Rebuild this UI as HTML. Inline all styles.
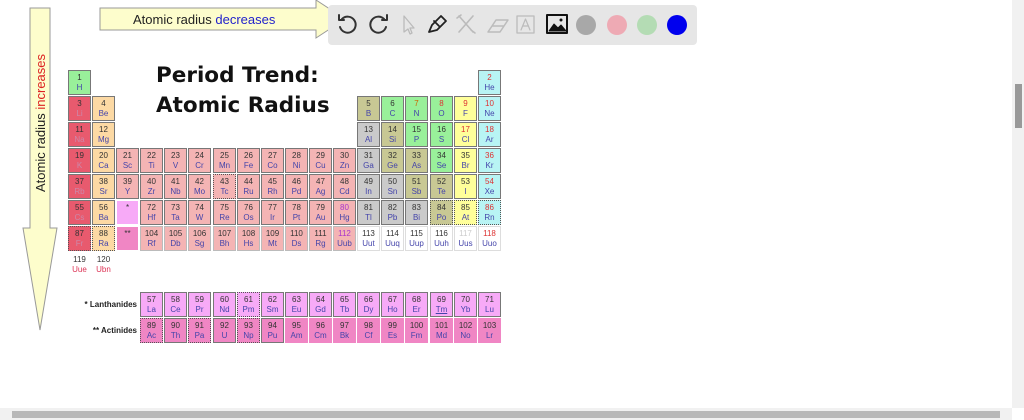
<!DOCTYPE html>
<html><head><style>
body{margin:0;width:1024px;height:420px;background:#fff;position:relative;overflow:hidden;font-family:"Liberation Sans",Arial,sans-serif}
.c{position:absolute;width:21px;height:23px;border:1px solid #777;text-align:center;font-size:8px;line-height:10px;box-sizing:content-box}
.c b{display:block;font-weight:normal;color:#333;margin-top:2px}
.c i{display:block;font-style:normal;color:#44a}
.d{border-style:dotted;border-color:#555}
.A{background:#e85a6e}.A i{color:#c8a}
.E{background:#fcd9a4}
.T{background:#f4b4b4}
.N{background:#99f09a}
.G{background:#b8f4f4}
.M{background:#c8c894}
.P{background:#cacaca}
.H{background:#ffff9a}
.W{background:#fff;border-color:#ddd}
.L{background:#f7aaf7}
.C{background:#f086c4}
.r b{color:#d33}
.lab{position:absolute;font-size:8px;font-weight:bold;color:#222;text-align:right;width:80px}
.tb{position:absolute;left:328px;top:5px;width:369px;height:40px;background:#e6e6e6;border-radius:4px}
</style></head><body>
<svg style="position:absolute;left:0;top:0" width="360" height="340">
<polygon points="30,8 50,8 50,228 57,228 40,330 23,228 30,228" fill="#fdfdcc" stroke="#999" stroke-width="1"/>
<polygon points="100,8 316,8 316,0 345,19 316,38 316,30 100,30" fill="#fdfdcc" stroke="#999" stroke-width="1"/>
<text transform="translate(45,192) rotate(-90)" font-family="Liberation Sans" font-size="13" fill="#222">Atomic radius <tspan fill="#d22">increases</tspan></text>
<text x="133" y="24" font-family="Liberation Sans" font-size="13" fill="#222">Atomic radius <tspan fill="#22c">decreases</tspan></text>
</svg>
<div class="tb">
<svg width="369" height="40" style="position:absolute;left:0;top:0" fill="none" stroke-width="2" stroke-linecap="round" stroke-linejoin="round">
<path d="M14 14a8 8 0 1 1 -2 8" stroke="#333"/><path d="M11 10v5h5" stroke="#333"/>
<path d="M56 14a8 8 0 1 0 2 8" stroke="#333"/><path d="M59 10v5h-5" stroke="#333"/>
<path d="M76 11l10 12-4 0 2 5-2 1-2-5-4 3z" stroke="#bbb" stroke-width="1.3"/>
<path d="M101 27l3-7 9-9 5 5-9 9z M106 16l5 5" stroke="#222" stroke-width="1.8"/>
<path d="M131 11l14 16M145 11l-14 16M129 13l4-3M143 25l4 3" stroke="#bbb" stroke-width="1.6"/>
<path d="M160 27l8-12h12l-8 12zM164 21h12" stroke="#bbb" stroke-width="1.5"/>
<rect x="189" y="11" width="17" height="17" stroke="#bbb" stroke-width="1.3"/><path d="M193 25l4.5-11 4.5 11M195 21h5" stroke="#bbb" stroke-width="1.2"/>
<rect x="219" y="10" width="20" height="18" stroke="#111" stroke-width="2"/><path d="M221 26l5-7 4 4 3-3 5 6z" fill="#111" stroke="#111" stroke-width="1"/><circle cx="233" cy="15" r="1.5" fill="#111" stroke="none"/>
<circle cx="258" cy="20" r="10" fill="#a8a8a8" stroke="none"/>
<circle cx="289" cy="20" r="10" fill="#eeaab4" stroke="none"/>
<circle cx="319" cy="20" r="10" fill="#b4dcb4" stroke="none"/>
<circle cx="349" cy="20" r="10" fill="#0000ee" stroke="none"/>
</svg></div>
<div style="position:absolute;left:156px;top:61px;font-family:'DejaVu Sans',sans-serif;font-weight:bold;font-size:21.5px;line-height:30px;color:#111">Period Trend:<br>Atomic Radius</div>

<div class="c N" style="left:68px;top:70px"><b>1</b><i>H</i></div>
<div class="c G r" style="left:478px;top:70px"><b>2</b><i>He</i></div>

<div class="c A" style="left:68px;top:96px"><b>3</b><i>Li</i></div>
<div class="c E" style="left:92px;top:96px"><b>4</b><i>Be</i></div>
<div class="c M" style="left:357px;top:96px"><b>5</b><i>B</i></div>
<div class="c N" style="left:381px;top:96px"><b>6</b><i>C</i></div>
<div class="c N" style="left:405px;top:96px"><b style="color:#c60">7</b><i>N</i></div>
<div class="c N r" style="left:430px;top:96px"><b>8</b><i>O</i></div>
<div class="c H r" style="left:454px;top:96px"><b>9</b><i>F</i></div>
<div class="c G r" style="left:478px;top:96px"><b>10</b><i>Ne</i></div>

<div class="c A" style="left:68px;top:122px"><b>11</b><i>Na</i></div>
<div class="c E" style="left:92px;top:122px"><b>12</b><i>Mg</i></div>
<div class="c P" style="left:357px;top:122px"><b>13</b><i>Al</i></div>
<div class="c M" style="left:381px;top:122px"><b>14</b><i>Si</i></div>
<div class="c N" style="left:405px;top:122px"><b>15</b><i>P</i></div>
<div class="c N" style="left:430px;top:122px"><b>16</b><i>S</i></div>
<div class="c H r" style="left:454px;top:122px"><b>17</b><i>Cl</i></div>
<div class="c G r" style="left:478px;top:122px"><b>18</b><i>Ar</i></div>

<div class="c A" style="left:68px;top:148px"><b>19</b><i>K</i></div>
<div class="c E" style="left:92px;top:148px"><b>20</b><i>Ca</i></div>
<div class="c T" style="left:116px;top:148px"><b>21</b><i>Sc</i></div>
<div class="c T" style="left:140px;top:148px"><b>22</b><i>Ti</i></div>
<div class="c T" style="left:164px;top:148px"><b>23</b><i>V</i></div>
<div class="c T" style="left:188px;top:148px"><b>24</b><i>Cr</i></div>
<div class="c T" style="left:213px;top:148px"><b>25</b><i>Mn</i></div>
<div class="c T" style="left:237px;top:148px"><b>26</b><i>Fe</i></div>
<div class="c T" style="left:261px;top:148px"><b>27</b><i>Co</i></div>
<div class="c T" style="left:285px;top:148px"><b>28</b><i>Ni</i></div>
<div class="c T" style="left:309px;top:148px"><b>29</b><i>Cu</i></div>
<div class="c T" style="left:333px;top:148px"><b>30</b><i>Zn</i></div>
<div class="c P" style="left:357px;top:148px"><b>31</b><i>Ga</i></div>
<div class="c M" style="left:381px;top:148px"><b>32</b><i>Ge</i></div>
<div class="c M" style="left:405px;top:148px"><b>33</b><i>As</i></div>
<div class="c N" style="left:430px;top:148px"><b>34</b><i>Se</i></div>
<div class="c H" style="left:454px;top:148px"><b>35</b><i>Br</i></div>
<div class="c G r" style="left:478px;top:148px"><b>36</b><i>Kr</i></div>

<div class="c A" style="left:68px;top:174px"><b>37</b><i>Rb</i></div>
<div class="c E" style="left:92px;top:174px"><b>38</b><i>Sr</i></div>
<div class="c T" style="left:116px;top:174px"><b>39</b><i>Y</i></div>
<div class="c T" style="left:140px;top:174px"><b>40</b><i>Zr</i></div>
<div class="c T" style="left:164px;top:174px"><b>41</b><i>Nb</i></div>
<div class="c T" style="left:188px;top:174px"><b>42</b><i>Mo</i></div>
<div class="c T d" style="left:213px;top:174px"><b>43</b><i>Tc</i></div>
<div class="c T" style="left:237px;top:174px"><b>44</b><i>Ru</i></div>
<div class="c T" style="left:261px;top:174px"><b>45</b><i>Rh</i></div>
<div class="c T" style="left:285px;top:174px"><b>46</b><i>Pd</i></div>
<div class="c T" style="left:309px;top:174px"><b>47</b><i>Ag</i></div>
<div class="c T" style="left:333px;top:174px"><b>48</b><i>Cd</i></div>
<div class="c P" style="left:357px;top:174px"><b>49</b><i>In</i></div>
<div class="c P" style="left:381px;top:174px"><b>50</b><i>Sn</i></div>
<div class="c M" style="left:405px;top:174px"><b>51</b><i>Sb</i></div>
<div class="c M" style="left:430px;top:174px"><b>52</b><i>Te</i></div>
<div class="c H" style="left:454px;top:174px"><b>53</b><i>I</i></div>
<div class="c G r" style="left:478px;top:174px"><b>54</b><i>Xe</i></div>

<div class="c A" style="left:68px;top:200px"><b>55</b><i>Cs</i></div>
<div class="c E" style="left:92px;top:200px"><b>56</b><i>Ba</i></div>
<div class="c L" style="left:116px;top:200px;border-color:#fff"><b>*</b><i></i></div>
<div class="c T" style="left:140px;top:200px"><b>72</b><i>Hf</i></div>
<div class="c T" style="left:164px;top:200px"><b>73</b><i>Ta</i></div>
<div class="c T" style="left:188px;top:200px"><b>74</b><i>W</i></div>
<div class="c T" style="left:213px;top:200px"><b>75</b><i>Re</i></div>
<div class="c T" style="left:237px;top:200px"><b>76</b><i>Os</i></div>
<div class="c T" style="left:261px;top:200px"><b>77</b><i>Ir</i></div>
<div class="c T" style="left:285px;top:200px"><b>78</b><i>Pt</i></div>
<div class="c T" style="left:309px;top:200px"><b>79</b><i>Au</i></div>
<div class="c T" style="left:333px;top:200px"><b style="color:#a3c">80</b><i>Hg</i></div>
<div class="c P" style="left:357px;top:200px"><b>81</b><i>Tl</i></div>
<div class="c P" style="left:381px;top:200px"><b>82</b><i>Pb</i></div>
<div class="c P" style="left:405px;top:200px"><b>83</b><i>Bi</i></div>
<div class="c M d" style="left:430px;top:200px"><b>84</b><i>Po</i></div>
<div class="c H d" style="left:454px;top:200px"><b>85</b><i>At</i></div>
<div class="c G r d" style="left:478px;top:200px"><b>86</b><i>Rn</i></div>

<div class="c A d" style="left:68px;top:226px"><b>87</b><i>Fr</i></div>
<div class="c E d" style="left:92px;top:226px"><b>88</b><i>Ra</i></div>
<div class="c C" style="left:116px;top:226px;border-color:#fff"><b>**</b><i></i></div>
<div class="c T" style="left:140px;top:226px;border-color:#bbb"><b>104</b><i>Rf</i></div>
<div class="c T" style="left:164px;top:226px;border-color:#bbb"><b>105</b><i>Db</i></div>
<div class="c T" style="left:188px;top:226px;border-color:#bbb"><b>106</b><i>Sg</i></div>
<div class="c T" style="left:213px;top:226px;border-color:#bbb"><b>107</b><i>Bh</i></div>
<div class="c T" style="left:237px;top:226px;border-color:#bbb"><b>108</b><i>Hs</i></div>
<div class="c T" style="left:261px;top:226px;border-color:#bbb"><b>109</b><i>Mt</i></div>
<div class="c T" style="left:285px;top:226px;border-color:#bbb"><b>110</b><i>Ds</i></div>
<div class="c T" style="left:309px;top:226px;border-color:#bbb"><b>111</b><i>Rg</i></div>
<div class="c T" style="left:333px;top:226px;border-color:#bbb"><b style="color:#a3c">112</b><i>Uub</i></div>
<div class="c W" style="left:357px;top:226px"><b>113</b><i>Uut</i></div>
<div class="c W" style="left:381px;top:226px"><b>114</b><i>Uuq</i></div>
<div class="c W" style="left:405px;top:226px"><b>115</b><i>Uup</i></div>
<div class="c W" style="left:430px;top:226px"><b>116</b><i>Uuh</i></div>
<div class="c W" style="left:454px;top:226px"><b style="color:#ccc">117</b><i>Uus</i></div>
<div class="c W r" style="left:478px;top:226px"><b>118</b><i>Uuo</i></div>

<div class="c" style="left:68px;top:252px;border-color:#fff"><b>119</b><i style="color:#d35">Uue</i></div>
<div class="c" style="left:92px;top:252px;border-color:#fff"><b>120</b><i style="color:#d35">Ubn</i></div>

<div class="lab" style="left:57px;top:300px">* Lanthanides</div>
<div class="lab" style="left:57px;top:326px">** Actinides</div>

<div class="c L" style="left:140px;top:292px"><b>57</b><i>La</i></div>
<div class="c L" style="left:164px;top:292px"><b>58</b><i>Ce</i></div>
<div class="c L" style="left:188px;top:292px"><b>59</b><i>Pr</i></div>
<div class="c L" style="left:213px;top:292px"><b>60</b><i>Nd</i></div>
<div class="c L d" style="left:237px;top:292px"><b>61</b><i>Pm</i></div>
<div class="c L" style="left:261px;top:292px"><b>62</b><i>Sm</i></div>
<div class="c L" style="left:285px;top:292px"><b>63</b><i>Eu</i></div>
<div class="c L" style="left:309px;top:292px"><b>64</b><i>Gd</i></div>
<div class="c L" style="left:333px;top:292px"><b>65</b><i>Tb</i></div>
<div class="c L" style="left:357px;top:292px"><b>66</b><i>Dy</i></div>
<div class="c L" style="left:381px;top:292px"><b>67</b><i>Ho</i></div>
<div class="c L" style="left:405px;top:292px"><b>68</b><i>Er</i></div>
<div class="c L" style="left:430px;top:292px"><b>69</b><i style="text-decoration:underline">Tm</i></div>
<div class="c L" style="left:454px;top:292px"><b>70</b><i>Yb</i></div>
<div class="c L" style="left:478px;top:292px"><b>71</b><i>Lu</i></div>

<div class="c C d" style="left:140px;top:318px"><b>89</b><i>Ac</i></div>
<div class="c C" style="left:164px;top:318px"><b>90</b><i>Th</i></div>
<div class="c C d" style="left:188px;top:318px"><b>91</b><i>Pa</i></div>
<div class="c C" style="left:213px;top:318px"><b>92</b><i>U</i></div>
<div class="c C d" style="left:237px;top:318px"><b>93</b><i>Np</i></div>
<div class="c C" style="left:261px;top:318px"><b>94</b><i>Pu</i></div>
<div class="c C" style="left:285px;top:318px;border-color:#f086c4"><b>95</b><i>Am</i></div>
<div class="c C" style="left:309px;top:318px;border-color:#f086c4"><b>96</b><i>Cm</i></div>
<div class="c C" style="left:333px;top:318px;border-color:#f086c4"><b>97</b><i>Bk</i></div>
<div class="c C" style="left:357px;top:318px;border-color:#f086c4"><b>98</b><i>Cf</i></div>
<div class="c C" style="left:381px;top:318px;border-color:#f086c4"><b>99</b><i>Es</i></div>
<div class="c C" style="left:405px;top:318px;border-color:#f086c4"><b>100</b><i>Fm</i></div>
<div class="c C" style="left:430px;top:318px;border-color:#f086c4"><b>101</b><i>Md</i></div>
<div class="c C" style="left:454px;top:318px;border-color:#f086c4"><b>102</b><i>No</i></div>
<div class="c C" style="left:478px;top:318px;border-color:#f086c4"><b>103</b><i>Lr</i></div>

<div style="position:absolute;left:1012px;top:0;width:12px;height:408px;background:#f1f1f1"></div>
<div style="position:absolute;left:1015px;top:84px;width:7px;height:44px;background:#999"></div>
<div style="position:absolute;left:0;top:408px;width:1012px;height:12px;background:#f1f1f1"></div>
<div style="position:absolute;left:12px;top:411px;width:988px;height:7px;background:#b8b8b8"></div>
</body></html>
